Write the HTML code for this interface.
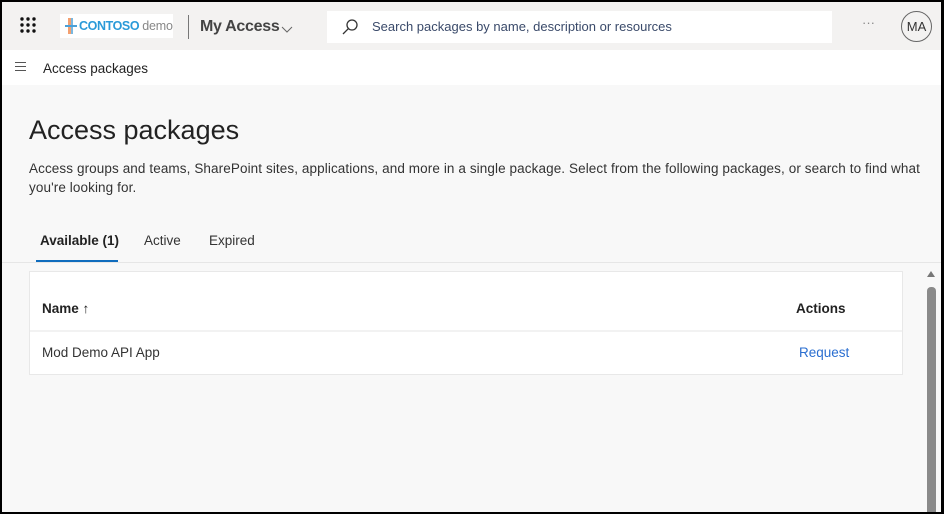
<!DOCTYPE html>
<html><head><meta charset="utf-8"><style>
*{box-sizing:border-box;margin:0;padding:0}
body{width:944px;height:514px;overflow:hidden;font-family:"Liberation Sans",sans-serif;background:#000}
.frame{position:absolute;left:2px;top:2px;width:939px;height:510px;background:#f8f8f8;overflow:hidden}
.hdr{position:absolute;left:0;top:0;width:100%;height:48px;background:#f3f2f1}
.bc{position:absolute;left:0;top:48px;width:100%;height:35px;background:#fff}
.t{position:absolute;white-space:nowrap}
</style></head><body>
<div class="frame">
<div class="hdr">
  <svg class="t" style="left:18px;top:15px" width="16" height="16" viewBox="0 0 16 16" fill="#111">
    <circle cx="2" cy="2" r="1.7"/><circle cx="8" cy="2" r="1.7"/><circle cx="14" cy="2" r="1.7"/>
    <circle cx="2" cy="8" r="1.7"/><circle cx="8" cy="8" r="1.7"/><circle cx="14" cy="8" r="1.7"/>
    <circle cx="2" cy="14" r="1.7"/><circle cx="8" cy="14" r="1.7"/><circle cx="14" cy="14" r="1.7"/>
  </svg>
  <div class="t" style="left:58px;top:12px;width:113px;height:24px;background:#fff"></div>
  <div class="t" style="left:66px;top:16px;width:3px;height:16px;background:#f4a070"></div>
  <div class="t" style="left:69px;top:16px;width:2px;height:16px;background:#7ab8e0"></div>
  <div class="t" style="left:63px;top:23px;width:12px;height:2px;background:#4aa0d8"></div>
  <div class="t" style="left:77px;top:17px;font-size:12.5px;color:#2a9ad8;font-weight:bold;letter-spacing:-0.4px">CONTOSO <span style="color:#888;font-weight:normal;letter-spacing:-0.2px">demo</span></div>
  <div class="t" style="left:186px;top:13px;width:1px;height:24px;background:#777"></div>
  <div class="t" style="left:198px;top:16px;font-size:16px;color:#444;font-weight:bold;letter-spacing:-0.3px">My Access</div>
  <svg class="t" style="left:279px;top:24px" width="12" height="7" viewBox="0 0 12 7"><path d="M1 1l5 5 5-5" stroke="#666" fill="none"/></svg>
  <div class="t" style="left:325px;top:9px;width:505px;height:32px;background:#fff"></div>
  <svg class="t" style="left:339px;top:16px" width="18" height="18" viewBox="0 0 18 18"><circle cx="11" cy="7" r="5" stroke="#333" stroke-width="1.3" fill="none"/><path d="M7.3 10.7L2 16" stroke="#333" stroke-width="1.3"/></svg>
  <div class="t" style="left:370px;top:17px;font-size:13px;color:#3a4a6a">Search packages by name, description or resources</div>
  <div class="t" style="left:860px;top:13px;font-size:13px;color:#888">···</div>
  <div class="t" style="left:899px;top:9px;width:31px;height:31px;border:1px solid #666;border-radius:50%;font-size:13px;color:#333;text-align:center;line-height:29px">MA</div>
</div>
<div class="bc">
  <div class="t" style="left:13px;top:12px;width:11px;height:9px;border-top:1.5px solid #555;border-bottom:1.5px solid #555"><div style="margin-top:2.5px;height:1.5px;background:#555"></div></div>
  <div class="t" style="left:41px;top:11px;font-size:13.5px;color:#222">Access packages</div>
</div>
<div class="t" style="left:27px;top:113px;font-size:27px;color:#222">Access packages</div>
<div class="t" style="left:27px;top:157px;font-size:13.5px;color:#333;line-height:19px;white-space:normal;width:900px;letter-spacing:0.1px">Access groups and teams, SharePoint sites, applications, and more in a single package. Select from the following packages, or search to find what you're looking for.</div>
<div class="t" style="left:38px;top:231px;font-size:13.5px;color:#222;font-weight:bold">Available (1)</div>
<div class="t" style="left:142px;top:231px;font-size:13.5px;color:#333">Active</div>
<div class="t" style="left:207px;top:231px;font-size:13.5px;color:#333">Expired</div>
<div class="t" style="left:34px;top:258px;width:82px;height:2px;background:#0f6cbd"></div>
<div class="t" style="left:0;top:260px;width:100%;height:1px;background:#e6e6e6"></div>
<div class="t" style="left:27px;top:269px;width:874px;height:104px;background:#fff;border:1px solid #e8e8e8"></div>
<div class="t" style="left:28px;top:328px;width:872px;height:2px;background:#f2f2f2"></div>
<div class="t" style="left:40px;top:299px;font-size:13.5px;color:#222;font-weight:bold">Name <span style="font-weight:normal">↑</span></div>
<div class="t" style="left:794px;top:299px;font-size:13.5px;color:#222;font-weight:bold">Actions</div>
<div class="t" style="left:40px;top:343px;font-size:13.5px;color:#333">Mod Demo API App</div>
<div class="t" style="left:797px;top:343px;font-size:13.5px;color:#2a6ed0">Request</div>
<div class="t" style="left:925px;top:269px;width:0;height:0;border-left:4px solid transparent;border-right:4px solid transparent;border-bottom:6px solid #777"></div>
<div class="t" style="left:925px;top:285px;width:9px;height:230px;background:#8a8a8a;border-radius:4px"></div>
</div>
</body></html>
